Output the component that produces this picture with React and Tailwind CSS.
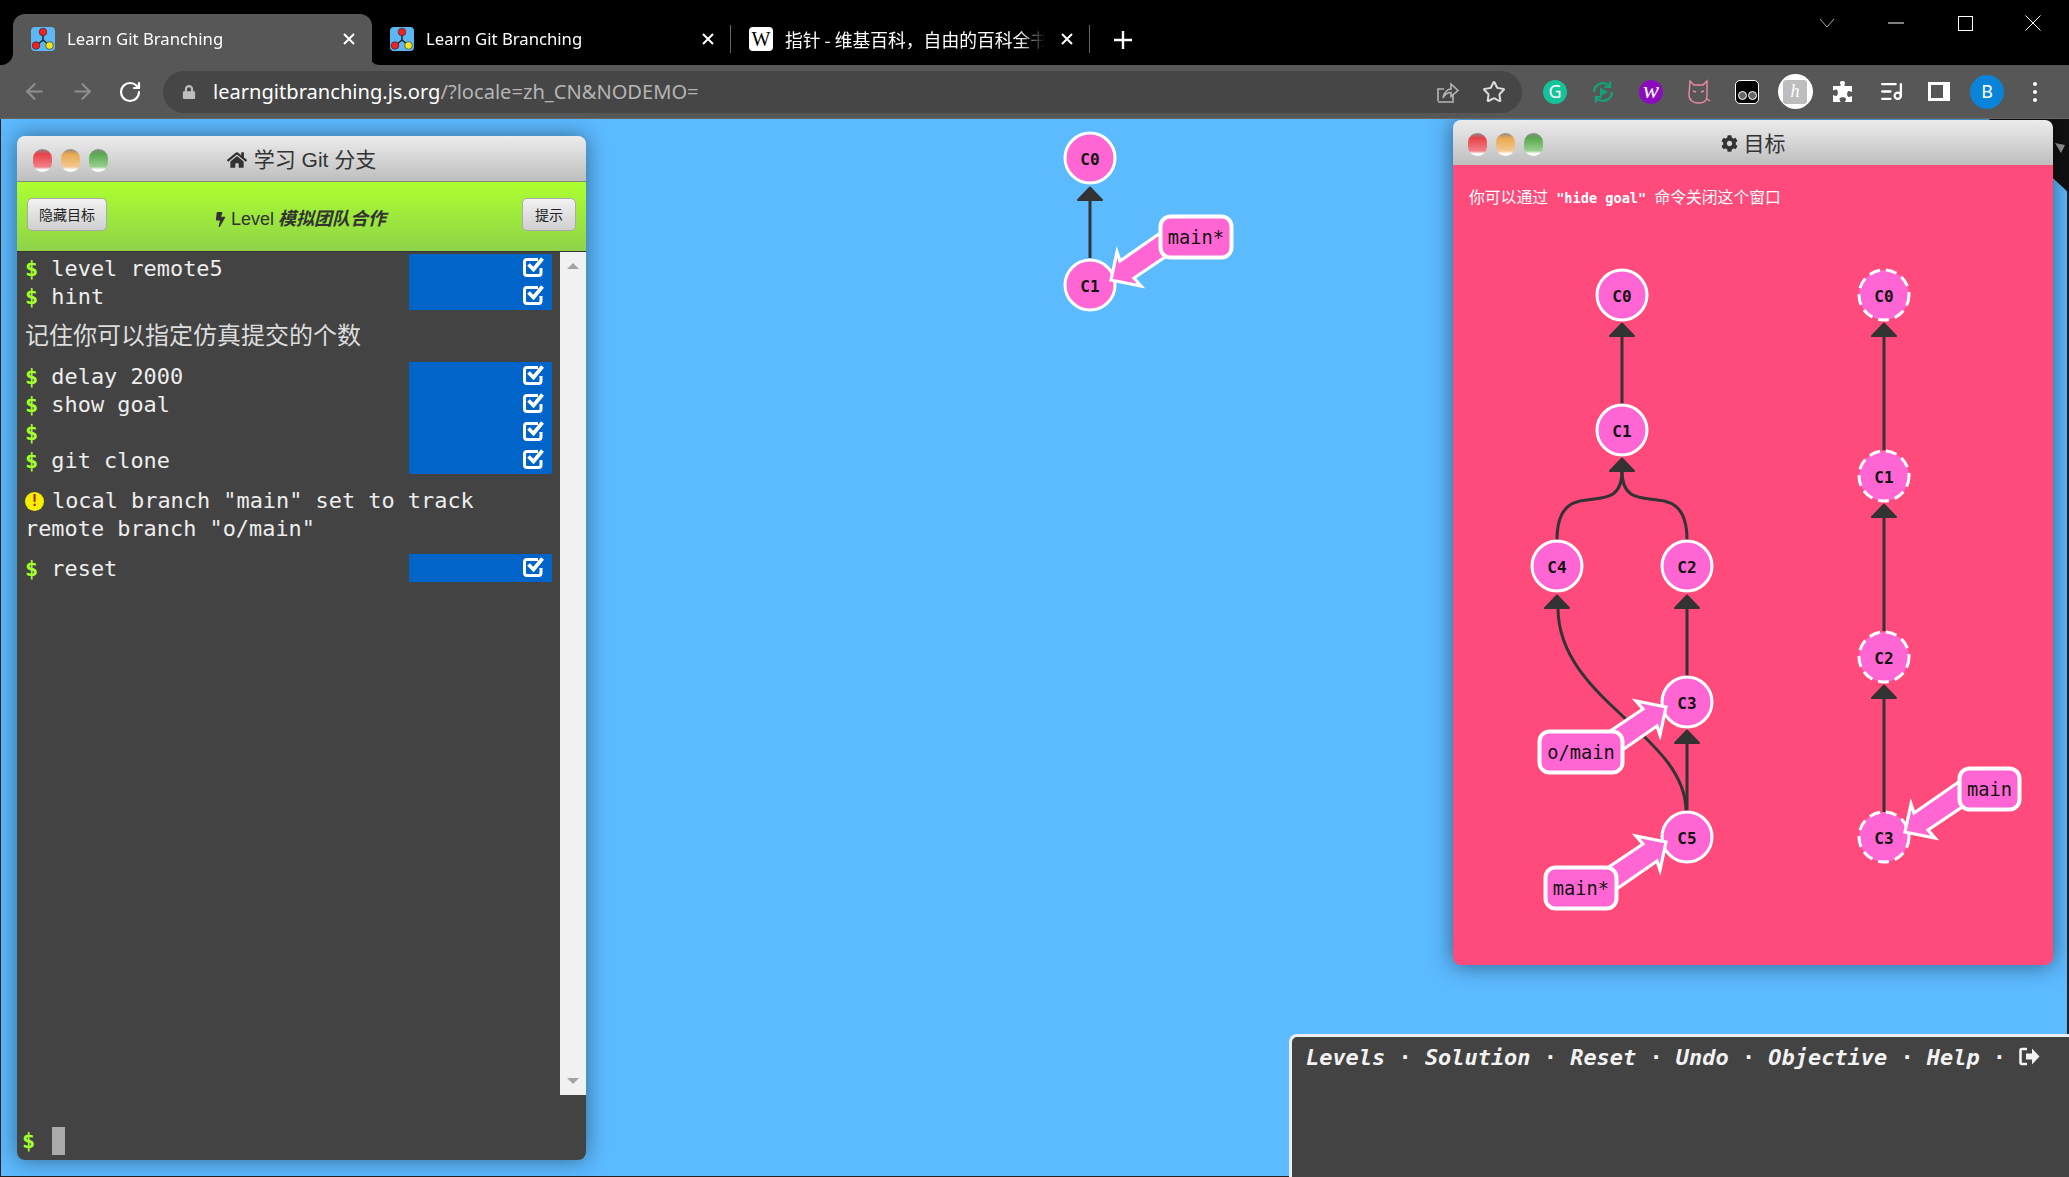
import React from "react";
import { ArrowLeft, ArrowRight, RotateCw, Star, ListMusic } from "lucide-react";
import { FaHome, FaCog, FaBolt, FaLock } from "react-icons/fa";

const MONO = "[font-family:'DejaVu_Sans_Mono',monospace]";
const FONT = "'DejaVu Sans Mono', monospace";

function Favicon() {
  return (
    <svg width="24" height="24" viewBox="0 0 24 24" className="shrink-0">
      <rect x="0" y="0" width="24" height="24" rx="4" fill="#5cb8f5" />
      <path d="M12 6 L12 13 M12 13 L6 18 M12 13 L18 18" stroke="#222" strokeWidth="1.5" fill="none" />
      <circle cx="12" cy="5" r="3.8" fill="#ee2222" stroke="#222" strokeWidth="0.6" />
      <circle cx="5" cy="18.5" r="3.8" fill="#ee2222" stroke="#222" strokeWidth="0.6" />
      <circle cx="18.5" cy="18.5" r="3.8" fill="#f2e41e" stroke="#222" strokeWidth="0.6" />
    </svg>
  );
}

function TabClose() {
  return (
    <svg width="12" height="12" viewBox="0 0 12 12" className="shrink-0">
      <path d="M1 1 L11 11 M11 1 L1 11" stroke="#fff" strokeWidth="2" />
    </svg>
  );
}

function Tab({ active, icon, title, sep, cjk }) {
  return (
    <div className={"relative h-[51px] w-[359px] shrink-0 flex items-center pl-[18px] pr-[17px] pb-[1px] rounded-t-[12px] " + (active ? "bg-[#575757]" : "")}>
      {active && (
        <svg width="12" height="12" viewBox="0 0 12 12" className="absolute left-[-12px] bottom-0">
          <path d="M12 0 V12 H0 A12 12 0 0 0 12 0 Z" fill="#575757" />
        </svg>
      )}
      {active && (
        <svg width="12" height="12" viewBox="0 0 12 12" className="absolute right-[-8px] bottom-0">
          <path d="M0 0 V12 H12 A12 12 0 0 1 0 0 Z" fill="#575757" />
        </svg>
      )}
      {icon}
      <div className={(cjk ? "text-[17.8px] [font-family:'Noto_Sans_CJK_SC',sans-serif] " : "text-[16.7px] [font-family:'Noto_Sans',sans-serif] ") + "ml-[12px] flex-1 min-w-0 overflow-hidden whitespace-nowrap text-white leading-[24px] [mask-image:linear-gradient(90deg,#000_90%,transparent)]"}>
        {title}
      </div>
      <div className="ml-[16px]"><TabClose /></div>
      {sep && <div className="absolute right-0 top-[11px] h-[28px] w-px bg-[#666]" />}
    </div>
  );
}

function TabStrip() {
  return (
    <div className="h-[65px] bg-black relative flex items-end pl-[13px]">
      <Tab active icon={<Favicon />} title="Learn Git Branching" />
      <Tab icon={<Favicon />} title="Learn Git Branching" sep />
      <Tab
        cjk
        icon={
          <div className="w-[24px] h-[24px] rounded-[4px] bg-white text-black flex items-center justify-center text-[20px] leading-none shrink-0 [font-family:'Liberation_Serif',serif]">W</div>
        }
        title={"指针 - 维基百科\uFF0C自由的百科全书"}
        sep
      />
      <div className="ml-[22px] mb-[14px] w-[22px] h-[22px] flex items-center justify-center">
        <svg width="20" height="20" viewBox="0 0 20 20"><path d="M10 1 V19 M1 10 H19" stroke="#fff" strokeWidth="2.4" /></svg>
      </div>
      <div className="absolute right-0 top-[13px] h-[20px] flex items-center text-white">
        <div className="w-[68px] flex justify-center">
          <svg width="16" height="10" viewBox="0 0 16 10"><path d="M1 1 L8 9 L15 1" stroke="#aaa" fill="none" /></svg>
        </div>
        <div className="w-[70px] flex justify-center">
          <svg width="16" height="2" viewBox="0 0 16 2"><path d="M0 1 H16" stroke="#fff" /></svg>
        </div>
        <div className="w-[68px] flex justify-center">
          <svg width="15" height="15" viewBox="0 0 15 15"><rect x="0.5" y="0.5" width="14" height="14" stroke="#fff" fill="none" /></svg>
        </div>
        <div className="w-[68px] mr-[2px] flex justify-center">
          <svg width="16" height="16" viewBox="0 0 16 16"><path d="M0.5 0.5 L15.5 15.5 M15.5 0.5 L0.5 15.5" stroke="#fff" /></svg>
        </div>
      </div>
    </div>
  );
}

function ExtSlot({ children }) {
  return <div className="w-[48px] h-[48px] flex items-center justify-center shrink-0">{children}</div>;
}

function Toolbar() {
  return (
    <div className="h-[54px] bg-[#575757] flex items-center pl-[10px] border-b border-[#666]">
      <ExtSlot><ArrowLeft size={25} strokeWidth={2} color="#8e8e8e" /></ExtSlot>
      <ExtSlot><ArrowRight size={25} strokeWidth={2} color="#8e8e8e" /></ExtSlot>
      <ExtSlot><RotateCw size={24} strokeWidth={2.2} color="#fff" /></ExtSlot>
      <div className="ml-[9px] w-[1359px] h-[42px] rounded-full bg-[#464646] flex items-center pl-[19px] pr-[16px]">
        <FaLock size={14} color="#bdbdbd" />
        <div className="ml-[17px] pt-[2px] flex-1 whitespace-nowrap text-[20.1px] [font-family:'Noto_Sans',sans-serif]">
          <span className="text-white">learngitbranching.js.org</span>
          <span className="text-[#b5b5b5]">/?locale=zh_CN&amp;NODEMO=</span>
        </div>
        <svg width="24" height="24" viewBox="0 0 24 24" fill="none" stroke="#b5b5b5" strokeWidth="1.6">
          <path d="M2 22 H18 M2 21 V9 H8 M17 14 V21" />
          <path d="M7 18 C8 12 12 9 15 9 V4 L22 10.5 L15 16.5 V12.5 C12 12.5 9 14 7 18 Z" />
        </svg>
        <div className="ml-[22px]"><Star size={24} strokeWidth={2} color="#dcdcdc" /></div>
      </div>
      <div className="ml-[9px] flex items-center">
        <ExtSlot>
          <div className="w-[24px] h-[24px] rounded-full bg-[#15c39a] text-white text-[18px] flex items-center justify-center [font-family:'Noto_Sans',sans-serif]">G</div>
        </ExtSlot>
        <ExtSlot>
          <svg width="24" height="24" viewBox="0 0 24 24" fill="none" stroke="#12a37a" strokeWidth="2.2">
            <path d="M3 12 A9 9 0 0 1 18 5.5 M21 12 A9 9 0 0 1 6 18.5" />
            <path d="M19 1.5 V7 H13.5 M5 22.5 V17 H10.5" />
            <path d="M9 7.5 L17 12 L9 16.5 Z" fill="#12a37a" stroke="none" />
          </svg>
        </ExtSlot>
        <ExtSlot>
          <div className="w-[24px] h-[24px] rounded-full bg-[#8a0dbd] text-white text-[24px] leading-[20px] pb-[3px] italic flex items-center justify-center [font-family:'Liberation_Serif',serif]">w</div>
        </ExtSlot>
        <ExtSlot>
          <svg width="26" height="26" viewBox="0 0 26 26" fill="none" stroke="#ea8ba0" strokeWidth="1.4">
            <path d="M4 2 L8 6 H17 L21 2 V17 C21 22 17 24 12.5 24 C8 24 3 22 3 16 Z" />
            <path d="M7 12 L10 13 M18 12 L15 13 M21 20 L24 22" />
          </svg>
        </ExtSlot>
        <ExtSlot>
          <div className="w-[24px] h-[24px] rounded-[5px] bg-black border border-white flex items-end justify-center gap-[1px] pb-[3px]">
            <div className="w-[9px] h-[9px] rounded-full bg-[#666] border border-white" />
            <div className="w-[9px] h-[9px] rounded-full bg-[#666] border border-white" />
          </div>
        </ExtSlot>
        <ExtSlot>
          <div className="w-[35px] h-[35px] rounded-full bg-white flex items-center justify-center">
            <div className="w-[24px] h-[24px] rounded-[3px] bg-[#bdbdbd] text-white italic text-[18px] flex items-center justify-center [font-family:'Liberation_Serif',serif]">h</div>
          </div>
        </ExtSlot>
        <ExtSlot>
          <svg width="22" height="24" viewBox="0 0 22 24" fill="#fff">
            <path d="M8 2.5 C8 0.5 13 0.5 13 2.5 C13 3.5 12.5 4 12.5 5 L12.5 6 H20 V12 C19 12 18.5 11 17 11 C14.5 11 14.5 17 17 17 C18.5 17 19 16 20 16 V22 H13 C13 21 14 20.5 14 19 C14 16.5 7.5 16.5 7.5 19 C7.5 20.5 8.5 21 8.5 22 H1 V15 C2 15 2.5 16 4 16 C6.5 16 6.5 9.5 4 9.5 C2.5 9.5 2 10.5 1 10.5 V6 H8.5 V5 C8.5 4 8 3.5 8 2.5 Z" />
          </svg>
        </ExtSlot>
        <ExtSlot><ListMusic size={25} strokeWidth={2.2} color="#fff" /></ExtSlot>
        <ExtSlot><div className="w-[22px] h-[19px] border-[3px] border-r-[7px] border-white" /></ExtSlot>
        <ExtSlot>
          <div className="w-[34px] h-[34px] rounded-full bg-[#0a84d8] text-white text-[18px] flex items-center justify-center [font-family:'Noto_Sans',sans-serif]">B</div>
        </ExtSlot>
        <ExtSlot>
          <div className="flex flex-col gap-[4px]">
            <div className="w-[4px] h-[4px] rounded-full bg-white" />
            <div className="w-[4px] h-[4px] rounded-full bg-white" />
            <div className="w-[4px] h-[4px] rounded-full bg-white" />
          </div>
        </ExtSlot>
      </div>
    </div>
  );
}

function Lights() {
  return (
    <div className="flex items-center gap-[9px] pt-[3px]">
      <div className="w-[19px] h-[23px] rounded-full bg-[linear-gradient(#8a8a8a,#e8424a_22%,#f08088_78%,#ffffff_90%)]" />
      <div className="w-[19px] h-[23px] rounded-full bg-[linear-gradient(#8a8a8a,#e8a850_22%,#f4c890_78%,#ffffff_90%)]" />
      <div className="w-[19px] h-[23px] rounded-full bg-[linear-gradient(#8a8a8a,#5aa84f_22%,#98d090_78%,#ffffff_90%)]" />
    </div>
  );
}

const TITLE_BG = "bg-[linear-gradient(#ececec,#bebebe)]";

function Check() {
  return (
    <svg width="22" height="20" viewBox="0 0 22 20" className="shrink-0 mb-[3px]">
      <path d="M15 2.5 H4 Q1.5 2.5 1.5 5 V16 Q1.5 18.5 4 18.5 H15.5 Q18 18.5 18 16 V11" stroke="#fff" strokeWidth="3" fill="none" />
      <path d="M5.5 7.5 L10.5 12.5 L19.5 1.5" stroke="#fff" strokeWidth="3.8" fill="none" />
    </svg>
  );
}

function Cmd({ text }) {
  return (
    <div className="h-[28px] flex items-center">
      <div className={"flex-1 pl-[8px] pt-[2px] whitespace-pre text-[21.9px] leading-[28px] text-[#eee] " + MONO}>
        <span className="text-[#a2ff2d] font-bold">$ </span>
        {text}
      </div>
      <div className="w-[143px] h-[28px] bg-[#0164c8] flex items-center justify-end pr-[7px]">
        <Check />
      </div>
    </div>
  );
}

function Terminal() {
  return (
    <div className="absolute left-[17px] top-[17px] w-[569px] h-[1024px] flex flex-col rounded-[8px] overflow-hidden shadow-[0_0_22px_rgba(0,0,0,0.45)]">
      <div className={"h-[46px] shrink-0 grid grid-cols-[1fr_auto_1fr] items-center px-[16px] border-b border-[#7d8a7a] " + TITLE_BG}>
        <Lights />
        <div className="flex items-center gap-[7px] pt-[3px] text-[21px] text-[#333] [font-family:'Liberation_Sans','Noto_Sans_CJK_SC',sans-serif]">
          <FaHome size={20} color="#333" />
          <span>学习 Git 分支</span>
        </div>
        <div />
      </div>
      <div className="h-[70px] shrink-0 grid grid-cols-[1fr_auto_1fr] items-start px-[10px] pt-[16px] bg-[linear-gradient(#adff2f,#8ed34a)] border-b border-[#333]">
        <div className="w-[80px] h-[33px] rounded-[5px] border border-[#aaa] bg-[linear-gradient(#f2f2f2,#cfcfcf)] text-[#222] text-[14px] flex items-center justify-center [font-family:'Noto_Sans_CJK_SC',sans-serif]">隐藏目标</div>
        <div className="mt-[4px] mr-[4px] h-[34px] flex items-center gap-[3px] text-[#333] text-[18px] [font-family:'Liberation_Sans','Noto_Sans_CJK_SC',sans-serif]">
          <FaBolt size={15} color="#333" />
          <span>Level</span>
          <span className="ml-[1px] font-bold italic">模拟团队合作</span>
        </div>
        <div className="justify-self-end w-[54px] h-[33px] rounded-[5px] border border-[#aaa] bg-[linear-gradient(#f2f2f2,#cfcfcf)] text-[#222] text-[14px] flex items-center justify-center [font-family:'Noto_Sans_CJK_SC',sans-serif]">提示</div>
      </div>
      <div className="flex-1 bg-[#434343] flex flex-col min-h-0">
        <div className="h-[843px] flex shrink-0">
          <div className="flex-1 pr-[8px] pt-[2px]">
            <Cmd text="level remote5" />
            <Cmd text="hint" />
            <div className="h-[52px] flex items-center pl-[8px] pb-[4px] text-[24px] text-[#ddd] [font-family:'Noto_Sans_CJK_SC',sans-serif]">记住你可以指定仿真提交的个数</div>
            <Cmd text="delay 2000" />
            <Cmd text="show goal" />
            <Cmd text="" />
            <Cmd text="git clone" />
            <div className={"mt-[13px] mb-[11px] pl-[8px] text-[21.9px] leading-[28px] text-[#eee] whitespace-pre " + MONO}>
              <div className="flex items-center">
                <div className="w-[19px] h-[19px] rounded-full bg-[#f6ee00] text-[#a01818] text-[15px] leading-none font-bold flex items-center justify-center mr-[8px]">!</div>
                <span>local branch "main" set to track</span>
              </div>
              <div>remote branch "o/main"</div>
            </div>
            <Cmd text="reset" />
          </div>
          <div className="w-[26px] bg-[#f1f1f1] flex flex-col items-center justify-between py-[11px]">
            <div className="w-0 h-0 border-x-[6px] border-x-transparent border-b-[6px] border-b-[#a3a3a3]" />
            <div className="w-0 h-0 border-x-[6px] border-x-transparent border-t-[6px] border-t-[#a3a3a3]" />
          </div>
        </div>
        <div className="flex-1 flex items-end pb-[5px] pl-[5px]">
          <span className={"w-[30px] text-[21.9px] leading-[28px] text-[#a2ff2d] font-bold " + MONO}>$</span>
          <div className="w-[13px] h-[28px] bg-[#aaa]" />
        </div>
      </div>
    </div>
  );
}

const EDGE = "#333";
const FILL = "#ff66d3";

function Head({ x, t }) {
  return <polygon points={`${x},${t + 1.5} ${x - 12},${t + 14} ${x + 12},${t + 14}`} fill={EDGE} stroke={EDGE} strokeWidth="2" strokeLinejoin="round" />;
}

function Line({ x, y1, y2 }) {
  return <path d={`M${x} ${y1} V${y2}`} stroke={EDGE} strokeWidth="3" fill="none" />;
}

function Commit({ x, y, label, dashed }) {
  return (
    <g>
      <circle cx={x} cy={y} r="25" fill={FILL} stroke="#fff" strokeWidth="3" strokeDasharray={dashed ? "11 6" : undefined} />
      <text x={x} y={y + 1} textAnchor="middle" dominantBaseline="central" fontFamily={FONT} fontWeight="bold" fontSize="16" fill="#111">{label}</text>
    </g>
  );
}

function Arrow({ tx, ty, flip }) {
  const s = flip ? -1 : 1;
  const pts = [[0, 0], [6, -28], [9, -19], [58, -53], [66, -31], [23, -2], [30, 6]];
  return (
    <polygon
      points={pts.map(([a, b]) => `${tx + s * a},${ty + s * b}`).join(" ")}
      fill={FILL}
      stroke="#fff"
      strokeWidth="3.2"
      strokeLinejoin="miter"
    />
  );
}

function Branch({ x, y, w, h, label }) {
  return (
    <g>
      <rect x={x + 2.5} y={y + 2.5} width={w - 5} height={h - 5} rx="10" fill={FILL} stroke="#fff" strokeWidth="4" />
      <text x={x + w / 2} y={y + h / 2} textAnchor="middle" dominantBaseline="central" fontFamily={FONT} fontSize="18.7" fill="#111">{label}</text>
    </g>
  );
}

function MainGraph() {
  return (
    <svg className="absolute left-0 top-0" width="2069" height="1058" viewBox="0 119 2069 1058">
      <Line x={1090} y1={258} y2={200} />
      <Head x={1090} t={186} />
      <Commit x={1090} y={158} label="C0" />
      <Commit x={1090} y={285} label="C1" />
      <Arrow tx={1111} ty={280} />
      <Branch x={1158} y={214} w={76} h={46} label="main*" />
    </svg>
  );
}

function GoalGraph() {
  return (
    <svg className="absolute left-0 top-0" width="600" height="800" viewBox="1453 165 600 800">
      <Line x={1622} y1={404} y2={336} />
      <Head x={1622} t={322} />
      <path d="M1557 540 C1557 470 1622 525 1622 471" stroke={EDGE} strokeWidth="3" fill="none" />
      <path d="M1687 540 C1687 470 1622 525 1622 471" stroke={EDGE} strokeWidth="3" fill="none" />
      <Head x={1622} t={457} />
      <Line x={1687} y1={676} y2={608} />
      <Head x={1687} t={594} />
      <path d="M1686 811 C1686 735 1558 700 1558 608" stroke={EDGE} strokeWidth="3" fill="none" />
      <Head x={1557} t={594} />
      <Line x={1687} y1={811} y2={743} />
      <Head x={1687} t={729} />

      <Commit x={1622} y={295} label="C0" />
      <Commit x={1622} y={430} label="C1" />
      <Commit x={1557} y={566} label="C4" />
      <Commit x={1687} y={566} label="C2" />
      <Commit x={1687} y={702} label="C3" />
      <Commit x={1687} y={837} label="C5" />

      <Arrow tx={1666} ty={707} flip />
      <Branch x={1537} y={729} w={88} h={46} label="o/main" />
      <Arrow tx={1666} ty={842} flip />
      <Branch x={1543} y={865} w={76} h={46} label="main*" />

      <Line x={1884} y1={450} y2={336} />
      <Head x={1884} t={322} />
      <Line x={1884} y1={631} y2={517} />
      <Head x={1884} t={503} />
      <Line x={1884} y1={812} y2={698} />
      <Head x={1884} t={684} />

      <Commit x={1884} y={295} label="C0" dashed />
      <Commit x={1884} y={476} label="C1" dashed />
      <Commit x={1884} y={657} label="C2" dashed />
      <Commit x={1884} y={837} label="C3" dashed />

      <Arrow tx={1905} ty={832} />
      <Branch x={1957} y={766} w={65} h={46} label="main" />
    </svg>
  );
}

function GoalWindow() {
  return (
    <div className="absolute left-[1453px] top-[1px] w-[600px] h-[845px] flex flex-col rounded-[8px] overflow-hidden shadow-[0_0_22px_rgba(0,0,0,0.5)]">
      <div className={"h-[45px] shrink-0 grid grid-cols-[1fr_auto_1fr] items-center px-[15px] " + TITLE_BG}>
        <Lights />
        <div className="flex items-center gap-[6px] pt-[2px] text-[21px] text-[#333] [font-family:'Liberation_Sans','Noto_Sans_CJK_SC',sans-serif]">
          <FaCog size={17} color="#333" />
          <span>目标</span>
        </div>
        <div />
      </div>
      <div className="relative flex-1 bg-[#fe4b7c]">
        <GoalGraph />
        <p className="relative pl-[16px] pt-[21px] text-[15.8px] leading-[22px] text-[#fff] whitespace-pre [font-family:'Noto_Sans_CJK_SC',sans-serif]">
          你可以通过<span className={"font-bold text-[13.6px] " + MONO}> "hide goal" </span>命令关闭这个窗口
        </p>
      </div>
    </div>
  );
}

function CommandBar() {
  const items = ["Levels", "Solution", "Reset", "Undo", "Objective", "Help"];
  return (
    <div className="absolute left-[1289px] top-[915px] right-0 bottom-0 bg-[#434343] border-l-[3px] border-t-[3px] border-[#eee] rounded-tl-[8px] pl-[14px] pt-[7px]">
      <div className={"flex items-center whitespace-pre font-bold italic text-[21.95px] leading-[28px] text-[#f2f2f2] " + MONO}>
        {items.map((t) => (
          <span key={t}>{t}<span className="not-italic"> · </span></span>
        ))}
        <svg width="21" height="19" viewBox="0 0 21 19" className="mb-[4px]">
          <path d="M8 2 H3 Q1.5 2 1.5 3.5 V15.5 Q1.5 17 3 17 H8" stroke="#f2f2f2" strokeWidth="2.6" fill="none" />
          <path d="M7 6.5 H13 V1.5 L20.5 9.5 L13 17.5 V12.5 H7 Z" fill="#f2f2f2" />
        </svg>
      </div>
    </div>
  );
}

export default function App() {
  return (
    <div className="w-[2069px] h-[1177px] flex flex-col overflow-hidden bg-black">
      <TabStrip />
      <Toolbar />
      <div className="relative flex-1 bg-[#5cbaff] overflow-hidden shadow-[inset_1px_0_0_#222,inset_-2px_0_0_#222,inset_0_-1px_0_#222]">
        <svg className="absolute right-0 top-0" width="80" height="80" viewBox="0 0 80 80">
          <polygon points="0,0 80,0 80,74" fill="#111" />
          <path d="M66 24 L76 26 L72 34 Z" fill="#999" />
        </svg>
        <MainGraph />
        <Terminal />
        <GoalWindow />
        <CommandBar />
      </div>
    </div>
  );
}
